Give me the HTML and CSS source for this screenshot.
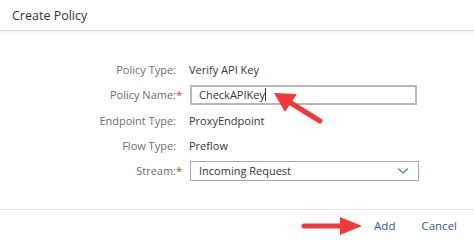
FILE: index.html
```html
<!DOCTYPE html>
<html>
<head>
<meta charset="utf-8">
<link rel="stylesheet" href="styles.css">
</head>
<body>
<div class="dialog">
  <header class="head">Create Policy</header>
  <main class="form">
    <div class="lbl">Policy Type:</div><div class="req"></div><div class="val">Verify API Key</div>
    <div class="lbl">Policy Name:</div><div class="req">*</div><div class="val"><div class="input">CheckAPIKey<span class="caret"></span></div></div>
    <div class="lbl">Endpoint Type:</div><div class="req"></div><div class="val">ProxyEndpoint</div>
    <div class="lbl">Flow Type:</div><div class="req"></div><div class="val">Preflow</div>
    <div class="lbl">Stream:</div><div class="req">*</div><div class="val"><div class="select"><span>Incoming Request</span><svg class="chev" width="12" height="8" viewBox="0 0 12 8"><path d="M1 1.5 L6 6 L11 1.5" fill="none" stroke="#5a7fa8" stroke-width="1.2"/></svg></div></div>
  </main>
  <footer class="foot">
    <button class="btn">Add</button>
    <button class="btn">Cancel</button>
  </footer>
  <svg class="arrow a1" width="474" height="240" viewBox="0 0 474 240">
    <line x1="320" y1="121" x2="286" y2="100" stroke="#ee3a3a" stroke-width="5" stroke-linecap="round"/>
    <polygon points="274,93 297,94 285,112" fill="#ee3a3a"/>
    <line x1="304" y1="226" x2="345" y2="226" stroke="#ee3a3a" stroke-width="5" stroke-linecap="round"/>
    <polygon points="362,226 340,217 340,235" fill="#ee3a3a"/>
  </svg>
</div>
</body>
</html>
```
FILE: styles.css
```css
html, body {
  margin: 0;
  padding: 0;
  background: #fff;
}
body {
  font-family: "Open Sans", "Liberation Sans", sans-serif;
  width: 474px;
  height: 240px;
  overflow: hidden;
}
.dialog {
  position: relative;
  width: 474px;
  height: 240px;
  display: flex;
  flex-direction: column;
}
.head {
  height: 31px;
  box-sizing: border-box;
  padding-left: 12px;
  font-size: 12.5px;
  line-height: 31px;
  color: #32363a;
  border-bottom: 1px solid #d9d9d9;
  box-shadow: 0 2px 3px rgba(0,0,0,0.06);
}
.form {
  flex: 1;
  display: grid;
  grid-template-columns: 176px 12px 229px;
  grid-auto-rows: 25.3px;
  align-items: center;
  padding-top: 26px;
  font-size: 11px;
}
.lbl {
  text-align: right;
  color: #6a6d70;
}
.req {
  color: #d9363e;
  padding-left: 0;
  font-size: 11.5px;
}
.val {
  color: #32363a;
  padding-left: 1px;
}
.input {
  width: 227px;
  height: 20px;
  box-sizing: border-box;
  border: 2px solid #b8b8b8;
  padding-left: 7px;
  line-height: 16px;
  margin-left: 1px;
  color: #32363a;
  display: flex;
  align-items: center;
}
.caret {
  display: inline-block;
  width: 1px;
  height: 13px;
  background: #333;
}
.select {
  width: 229px;
  height: 20px;
  box-sizing: border-box;
  border: 1px solid #a8a8a8;
  margin-left: 1px;
  padding: 0 9px 0 8px;
  display: flex;
  align-items: center;
  justify-content: space-between;
  color: #32363a;
}
.foot {
  height: 30px;
  border-top: 1px solid #e5e5e5;
  display: flex;
  justify-content: flex-end;
  align-items: center;
  gap: 14px;
  padding-right: 11px;
}
.btn {
  background: none;
  border: none;
  padding: 0 6px;
  font-family: inherit;
  font-size: 11.5px;
  color: #345b8c;
}
.arrow {
  position: absolute;
  left: 0;
  top: 0;
  pointer-events: none;
}
```
